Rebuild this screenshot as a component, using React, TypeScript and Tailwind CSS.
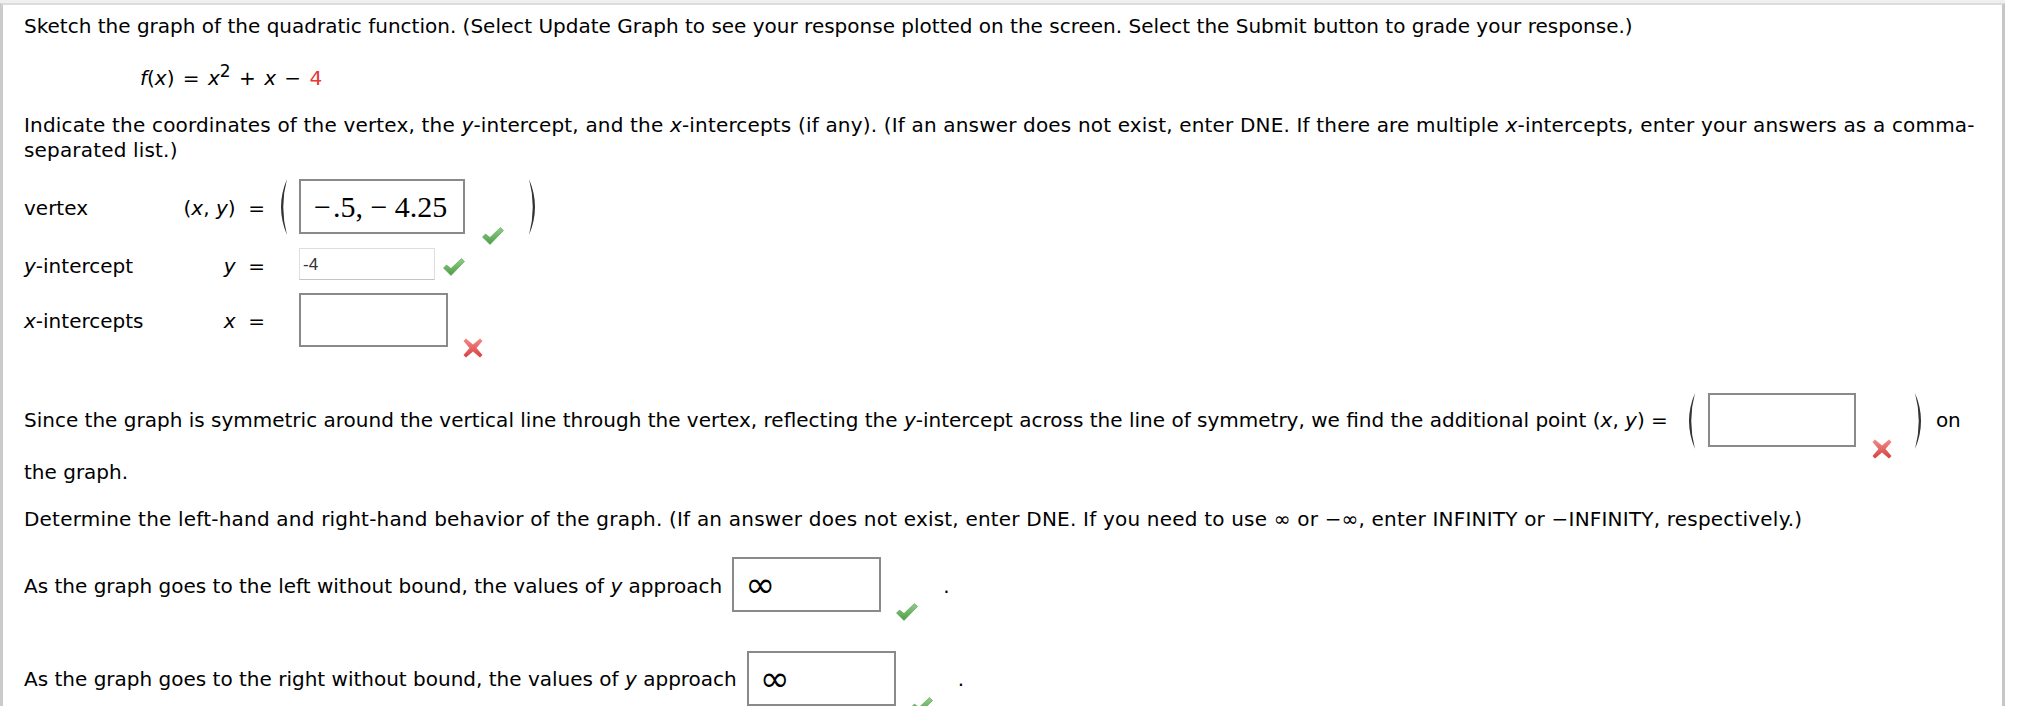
import React from 'react'

function Paren({ right = false, className = '' }: { right?: boolean; className?: string }) {
  return (
    <svg width="13" height="56" viewBox="0 0 13 56" className={`shrink-0 ${className}`}>
      <path
        d={right ? 'M1 0 Q13 28 1 56 Q8.5 28 1 0 Z' : 'M12 0 Q0 28 12 56 Q4.5 28 12 0 Z'}
        fill="#333"
      />
    </svg>
  )
}

function Check({ className = '' }: { className?: string }) {
  return (
    <svg width="22" height="19" viewBox="0 0 22 19" className={`shrink-0 ${className}`}>
      <defs>
        <linearGradient id="ok" x1="0" y1="0" x2="0" y2="1">
          <stop offset="0" stopColor="#8fd087" />
          <stop offset="1" stopColor="#4c9d46" />
        </linearGradient>
      </defs>
      <polygon points="0.5,10 3.5,7 8,10.5 18.5,0.5 21.5,3.5 8,17.5" fill="url(#ok)" stroke="#5a9a52" strokeWidth="0.6" />
    </svg>
  )
}

function Cross({ className = '' }: { className?: string }) {
  return (
    <svg width="20" height="20" viewBox="0 0 20 20" className={`shrink-0 ${className}`}>
      <defs>
        <linearGradient id="bad" x1="0" y1="0" x2="0" y2="1">
          <stop offset="0" stopColor="#f28b8b" />
          <stop offset="1" stopColor="#d8403f" />
        </linearGradient>
      </defs>
      <polygon
        points="3,0.5 10,6.5 17,0.5 19.5,3 13.5,10 19.5,17 17,19.5 10,13.5 3,19.5 0.5,17 6.5,10 0.5,3"
        fill="url(#bad)"
      />
    </svg>
  )
}

export default function App() {
  return (
    <div className="w-[2018px] h-[706px] bg-white overflow-hidden">
      <div className="w-[2005px] h-full bg-[#efefef] pt-[3px]">
        <div className="h-full bg-white border-t-2 border-t-[#dcdcdc] border-l-[3px] border-l-[#cbcbcb] border-r-[3px] border-r-[#c6c6c6] pl-[21px] pt-[9px] font-['DejaVu_Sans',sans-serif] text-[20px] leading-[25px] text-black">
          <p className="whitespace-nowrap">
            Sketch the graph of the quadratic function. (Select Update Graph to see your response plotted on the screen. Select the Submit button to grade your response.)
          </p>

          <p className="mt-[27px] pl-[116px] whitespace-nowrap [word-spacing:2px]">
            <i>f</i>(<i>x</i>) = <i>x</i>
            <sup className="text-[17px]">2</sup> + <i>x</i> − <span className="text-[#e8392f]">4</span>
          </p>

          <p className="mt-[22px] whitespace-nowrap tracking-[0.17px]">
            Indicate the coordinates of the vertex, the <i>y</i>-intercept, and the <i>x</i>-intercepts (if any). (If an answer does not exist, enter DNE. If there are multiple <i>x</i>-intercepts, enter your answers as a comma-
            <br />
            separated list.)
          </p>

          {/* vertex */}
          <div className="mt-[16px] h-[69px] flex items-start">
            <div className="w-[241px] flex justify-between mt-[17px]">
              <span>vertex</span>
              <span>
                (<i>x</i>, <i>y</i>) &nbsp;=
              </span>
            </div>
            <Paren className="ml-[10px]" />
            <div className="ml-[11px] w-[166px] h-[55px] border-2 border-[#8a8a8a] flex items-center pl-[13px] font-['Liberation_Serif',serif] text-[30px] leading-none whitespace-pre">
              <span>
                −<span className="ml-[2px]">.5,</span> − 4.25
              </span>
            </div>
            <Check className="ml-[17px] mt-[48px]" />
            <Paren right className="ml-[24px]" />
          </div>

          {/* y-intercept */}
          <div className="h-[45px] flex items-start">
            <div className="w-[241px] flex justify-between mt-[6px]">
              <span>
                <i>y</i>-intercept
              </span>
              <span>
                <i>y</i> &nbsp;=
              </span>
            </div>
            <div className="ml-[34px] w-[136px] h-[32px] border border-[#dedede] border-b-[#c4c4c4] pl-[3px] flex items-center font-['Liberation_Sans',sans-serif] text-[17px] text-[#333]">
              -4
            </div>
            <Check className="ml-[8px] mt-[10px]" />
          </div>

          {/* x-intercepts */}
          <div className="h-[100px] flex items-start">
            <div className="w-[241px] flex justify-between mt-[16px]">
              <span>
                <i>x</i>-intercepts
              </span>
              <span>
                <i>x</i> &nbsp;=
              </span>
            </div>
            <div className="ml-[34px] w-[149px] h-[54px] border-2 border-[#8a8a8a]" />
            <Cross className="ml-[15px] mt-[45px]" />
          </div>

          {/* symmetric point */}
          <div className="h-[67px] flex items-start whitespace-nowrap">
            <span className="mt-[15px]">
              Since the graph is symmetric around the vertical line through the vertex, reflecting the <i>y</i>-intercept across the line of symmetry, we find the additional point (<i>x</i>, <i>y</i>) =
            </span>
            <Paren className="ml-[15px]" />
            <div className="ml-[12px] w-[148px] h-[54px] border-2 border-[#8a8a8a]" />
            <Cross className="ml-[16px] mt-[46px]" />
            <Paren right className="ml-[22px]" />
            <span className="ml-[9px] mt-[15px]">on</span>
          </div>
          <p>the graph.</p>

          <p className="mt-[22px] whitespace-nowrap tracking-[0.2px]">
            Determine the left-hand and right-hand behavior of the graph. (If an answer does not exist, enter DNE. If you need to use ∞ or −∞, enter INFINITY or −INFINITY, respectively.)
          </p>

          {/* left behaviour */}
          <div className="mt-[25px] h-[94px] flex items-start whitespace-nowrap">
            <span className="mt-[17px]">
              As the graph goes to the left without bound, the values of <i>y</i> approach
            </span>
            <div className="ml-[10px] w-[149px] h-[55px] border-2 border-[#8a8a8a] flex items-center pl-[11px] text-[36px] leading-none">
              ∞
            </div>
            <Check className="ml-[15px] mt-[46px]" />
            <span className="ml-[25px] mt-[17px]">.</span>
          </div>

          {/* right behaviour */}
          <div className="h-[55px] flex items-start whitespace-nowrap">
            <span className="mt-[16px]">
              As the graph goes to the right without bound, the values of <i>y</i> approach
            </span>
            <div className="ml-[10px] w-[149px] h-[55px] border-2 border-[#8a8a8a] flex items-center pl-[11px] text-[36px] leading-none">
              ∞
            </div>
            <Check className="ml-[15px] mt-[46px]" />
            <span className="ml-[25px] mt-[16px]">.</span>
          </div>
        </div>
      </div>
    </div>
  )
}
